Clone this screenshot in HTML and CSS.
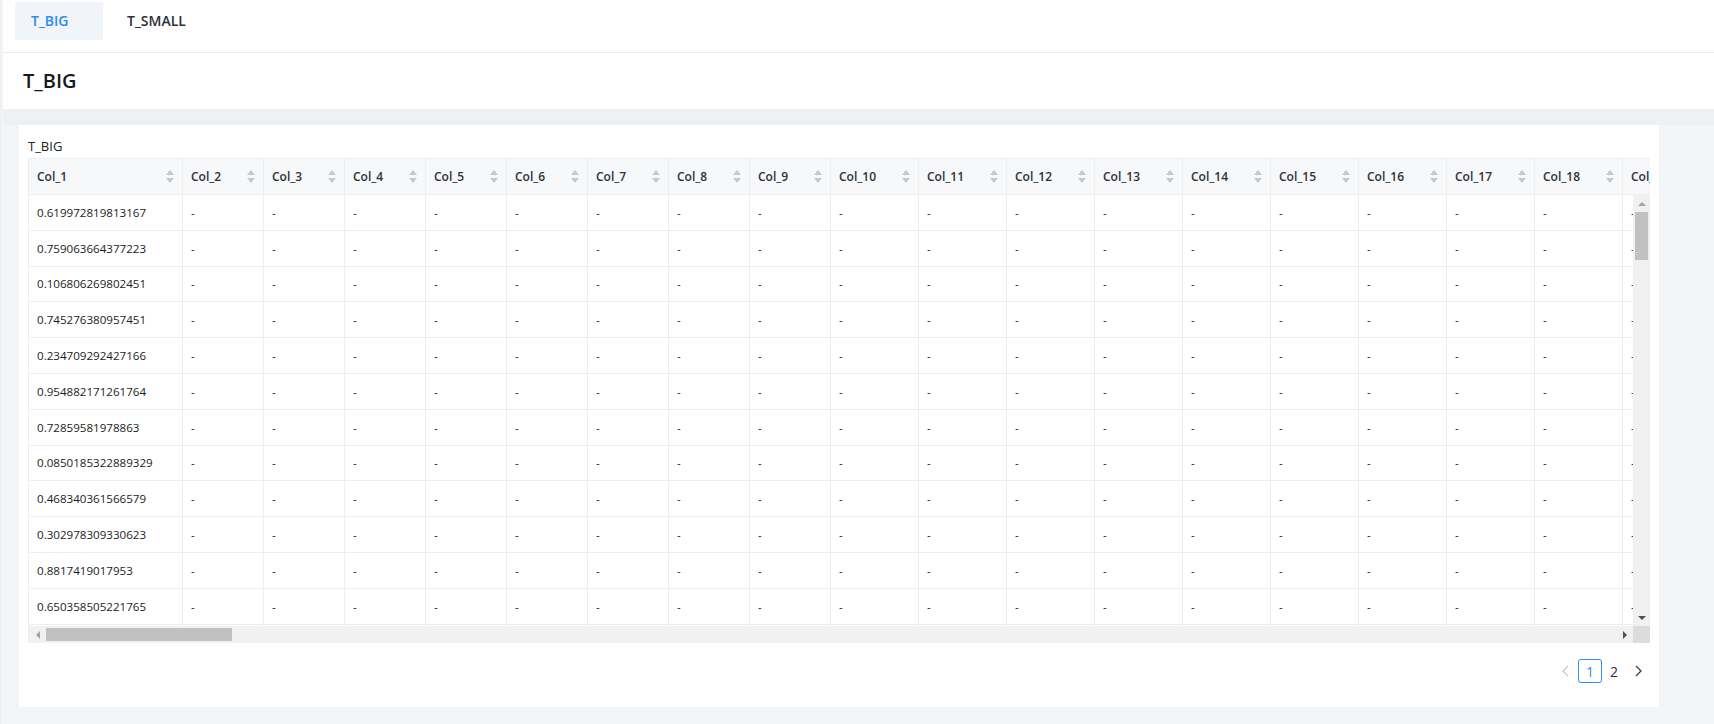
FILE: index.html
```html
<!DOCTYPE html>
<html lang="en">
<head>
<meta charset="utf-8">
<title>T_BIG</title>
<link rel="stylesheet" href="styles.css">
</head>
<body>
<div class="app">
  <div class="strip"></div>
  <div class="main">
    <div class="tabs">
      <div class="tab active">T_BIG</div>
      <div class="tab">T_SMALL</div>
    </div>
    <div class="page-head">T_BIG</div>
    <div class="content">
      <div class="card">
        <div class="card-label">T_BIG</div>
        <div class="tbl">
          <div class="thead">
            <div class="row">
              <div class="th"><span>Col_1</span><i class="sort"></i></div>
              <div class="th"><span>Col_2</span><i class="sort"></i></div>
              <div class="th"><span>Col_3</span><i class="sort"></i></div>
              <div class="th"><span>Col_4</span><i class="sort"></i></div>
              <div class="th"><span>Col_5</span><i class="sort"></i></div>
              <div class="th"><span>Col_6</span><i class="sort"></i></div>
              <div class="th"><span>Col_7</span><i class="sort"></i></div>
              <div class="th"><span>Col_8</span><i class="sort"></i></div>
              <div class="th"><span>Col_9</span><i class="sort"></i></div>
              <div class="th"><span>Col_10</span><i class="sort"></i></div>
              <div class="th"><span>Col_11</span><i class="sort"></i></div>
              <div class="th"><span>Col_12</span><i class="sort"></i></div>
              <div class="th"><span>Col_13</span><i class="sort"></i></div>
              <div class="th"><span>Col_14</span><i class="sort"></i></div>
              <div class="th"><span>Col_15</span><i class="sort"></i></div>
              <div class="th"><span>Col_16</span><i class="sort"></i></div>
              <div class="th"><span>Col_17</span><i class="sort"></i></div>
              <div class="th"><span>Col_18</span><i class="sort"></i></div>
              <div class="th"><span>Col_19</span><i class="sort"></i></div>
            </div>
          </div>
          <div class="tbody">
            <div class="body-view">
              <div class="row tr"><div class="td">0.619972819813167</div><div class="td">-</div><div class="td">-</div><div class="td">-</div><div class="td">-</div><div class="td">-</div><div class="td">-</div><div class="td">-</div><div class="td">-</div><div class="td">-</div><div class="td">-</div><div class="td">-</div><div class="td">-</div><div class="td">-</div><div class="td">-</div><div class="td">-</div><div class="td">-</div><div class="td">-</div><div class="td">-</div></div>
              <div class="row tr"><div class="td">0.759063664377223</div><div class="td">-</div><div class="td">-</div><div class="td">-</div><div class="td">-</div><div class="td">-</div><div class="td">-</div><div class="td">-</div><div class="td">-</div><div class="td">-</div><div class="td">-</div><div class="td">-</div><div class="td">-</div><div class="td">-</div><div class="td">-</div><div class="td">-</div><div class="td">-</div><div class="td">-</div><div class="td">-</div></div>
              <div class="row tr"><div class="td">0.106806269802451</div><div class="td">-</div><div class="td">-</div><div class="td">-</div><div class="td">-</div><div class="td">-</div><div class="td">-</div><div class="td">-</div><div class="td">-</div><div class="td">-</div><div class="td">-</div><div class="td">-</div><div class="td">-</div><div class="td">-</div><div class="td">-</div><div class="td">-</div><div class="td">-</div><div class="td">-</div><div class="td">-</div></div>
              <div class="row tr"><div class="td">0.745276380957451</div><div class="td">-</div><div class="td">-</div><div class="td">-</div><div class="td">-</div><div class="td">-</div><div class="td">-</div><div class="td">-</div><div class="td">-</div><div class="td">-</div><div class="td">-</div><div class="td">-</div><div class="td">-</div><div class="td">-</div><div class="td">-</div><div class="td">-</div><div class="td">-</div><div class="td">-</div><div class="td">-</div></div>
              <div class="row tr"><div class="td">0.234709292427166</div><div class="td">-</div><div class="td">-</div><div class="td">-</div><div class="td">-</div><div class="td">-</div><div class="td">-</div><div class="td">-</div><div class="td">-</div><div class="td">-</div><div class="td">-</div><div class="td">-</div><div class="td">-</div><div class="td">-</div><div class="td">-</div><div class="td">-</div><div class="td">-</div><div class="td">-</div><div class="td">-</div></div>
              <div class="row tr"><div class="td">0.954882171261764</div><div class="td">-</div><div class="td">-</div><div class="td">-</div><div class="td">-</div><div class="td">-</div><div class="td">-</div><div class="td">-</div><div class="td">-</div><div class="td">-</div><div class="td">-</div><div class="td">-</div><div class="td">-</div><div class="td">-</div><div class="td">-</div><div class="td">-</div><div class="td">-</div><div class="td">-</div><div class="td">-</div></div>
              <div class="row tr"><div class="td">0.72859581978863</div><div class="td">-</div><div class="td">-</div><div class="td">-</div><div class="td">-</div><div class="td">-</div><div class="td">-</div><div class="td">-</div><div class="td">-</div><div class="td">-</div><div class="td">-</div><div class="td">-</div><div class="td">-</div><div class="td">-</div><div class="td">-</div><div class="td">-</div><div class="td">-</div><div class="td">-</div><div class="td">-</div></div>
              <div class="row tr"><div class="td">0.0850185322889329</div><div class="td">-</div><div class="td">-</div><div class="td">-</div><div class="td">-</div><div class="td">-</div><div class="td">-</div><div class="td">-</div><div class="td">-</div><div class="td">-</div><div class="td">-</div><div class="td">-</div><div class="td">-</div><div class="td">-</div><div class="td">-</div><div class="td">-</div><div class="td">-</div><div class="td">-</div><div class="td">-</div></div>
              <div class="row tr"><div class="td">0.468340361566579</div><div class="td">-</div><div class="td">-</div><div class="td">-</div><div class="td">-</div><div class="td">-</div><div class="td">-</div><div class="td">-</div><div class="td">-</div><div class="td">-</div><div class="td">-</div><div class="td">-</div><div class="td">-</div><div class="td">-</div><div class="td">-</div><div class="td">-</div><div class="td">-</div><div class="td">-</div><div class="td">-</div></div>
              <div class="row tr"><div class="td">0.302978309330623</div><div class="td">-</div><div class="td">-</div><div class="td">-</div><div class="td">-</div><div class="td">-</div><div class="td">-</div><div class="td">-</div><div class="td">-</div><div class="td">-</div><div class="td">-</div><div class="td">-</div><div class="td">-</div><div class="td">-</div><div class="td">-</div><div class="td">-</div><div class="td">-</div><div class="td">-</div><div class="td">-</div></div>
              <div class="row tr"><div class="td">0.8817419017953</div><div class="td">-</div><div class="td">-</div><div class="td">-</div><div class="td">-</div><div class="td">-</div><div class="td">-</div><div class="td">-</div><div class="td">-</div><div class="td">-</div><div class="td">-</div><div class="td">-</div><div class="td">-</div><div class="td">-</div><div class="td">-</div><div class="td">-</div><div class="td">-</div><div class="td">-</div><div class="td">-</div></div>
              <div class="row tr"><div class="td">0.650358505221765</div><div class="td">-</div><div class="td">-</div><div class="td">-</div><div class="td">-</div><div class="td">-</div><div class="td">-</div><div class="td">-</div><div class="td">-</div><div class="td">-</div><div class="td">-</div><div class="td">-</div><div class="td">-</div><div class="td">-</div><div class="td">-</div><div class="td">-</div><div class="td">-</div><div class="td">-</div><div class="td">-</div></div>
              <div class="row tr"><div class="td">0.412376521839274</div><div class="td">-</div><div class="td">-</div><div class="td">-</div><div class="td">-</div><div class="td">-</div><div class="td">-</div><div class="td">-</div><div class="td">-</div><div class="td">-</div><div class="td">-</div><div class="td">-</div><div class="td">-</div><div class="td">-</div><div class="td">-</div><div class="td">-</div><div class="td">-</div><div class="td">-</div><div class="td">-</div></div>
            </div>
            <div class="vbar">
              <div class="sb-btn"><i class="tri tri-up"></i></div>
              <div class="vthumb"></div>
              <div class="sb-fill"></div>
              <div class="sb-btn"><i class="tri tri-down"></i></div>
            </div>
          </div>
          <div class="hrow">
            <div class="hbar">
              <div class="sb-btn"><i class="tri tri-left"></i></div>
              <div class="hthumb"></div>
              <div class="sb-fill"></div>
              <div class="sb-btn"><i class="tri tri-right"></i></div>
            </div>
            <div class="corner"></div>
          </div>
        </div>
        <div class="pager">
          <div class="pg pg-prev"><svg width="24" height="24" viewBox="0 0 24 24"><polyline points="14,7 9,12 14,17" fill="none" stroke="#c5c8ce" stroke-width="1.3"/></svg></div>
          <div class="pg pg-active">1</div>
          <div class="pg">2</div>
          <div class="pg pg-next"><svg width="24" height="24" viewBox="0 0 24 24"><polyline points="10,7 15,12 10,17" fill="none" stroke="#3a3d44" stroke-width="1.3"/></svg></div>
        </div>
      </div>
    </div>
  </div>
</div>
</body>
</html>
```
FILE: styles.css
```css
* { box-sizing: border-box; }
html, body { margin: 0; padding: 0; }
body {
  font-family: "Open Sans", "Noto Sans", "Liberation Sans", sans-serif;
  color: #1f2329;
  background: #fff;
  overflow: hidden;
}
.app { display: flex; height: 724px; }
.strip { width: 3px; flex: none; background: linear-gradient(to right, #eceef1, #f6f7f9); }
.main { flex: 1; min-width: 0; display: flex; flex-direction: column; }

.tabs {
  height: 53px;
  flex: none;
  border-bottom: 1px solid #e8ecf1;
  display: flex;
  align-items: flex-start;
  gap: 8px;
  padding: 2px 0 0 12px;
}
.tab {
  height: 38px;
  line-height: 38px;
  padding: 0 16px;
  font-size: 14px;
  font-weight: 600;
  color: #2c3038;
}
.tab.active { width: 88px; background: #f1f5f9; color: #2d8cf0; }

.page-head {
  height: 56px;
  flex: none;
  line-height: 56px;
  padding-left: 20px;
  font-size: 20px;
  font-weight: 600;
  color: #17191c;
}

.content {
  flex: 1;
  padding: 16px 55px 17px 16px;
  background: linear-gradient(#eef1f4 0, #eef1f4 16px, #f3f5f8 16px);
}
.card { height: 582px; background: #fff; padding: 11px 9px 0; }
.card-label { font-size: 13px; line-height: 20px; color: #222; margin-bottom: 2px; }

.tbl {
  width: 1622px;
  border-top: 1px solid #ebeef2;
  border-left: 1px solid #ebeef2;
  overflow: hidden;
}
.row {
  display: grid;
  grid-template-columns: 154px repeat(8, 81px) repeat(10, 88px);
  width: 1682px;
}
.thead { height: 36px; overflow: hidden; }
.th {
  height: 36px;
  background: #f6f8fa;
  border-right: 1px solid #ebeef2;
  border-bottom: 1px solid #ebeef2;
  padding: 0 8px;
  display: flex;
  align-items: center;
  justify-content: space-between;
  font-size: 12px;
  font-weight: 600;
  color: #2e3238;
  white-space: nowrap;
}
.sort { display: flex; flex-direction: column; gap: 3px; flex: none; }
.sort::before, .sort::after {
  content: "";
  display: block;
  border-left: 4px solid transparent;
  border-right: 4px solid transparent;
}
.sort::before { border-bottom: 5px solid #c5c8ce; }
.sort::after { border-top: 5px solid #c5c8ce; }

.tbody { display: flex; height: 431px; }
.body-view { width: 1604px; height: 431px; overflow: hidden; flex: none; }
.tr { height: 35.8px; }
.td {
  border-right: 1px solid #ebeef2;
  border-bottom: 1px solid #ebeef2;
  padding: 0 8px;
  display: flex;
  align-items: center;
  font-size: 11.6px;
  color: #1b1d21;
  white-space: nowrap;
  overflow: hidden;
}

.vbar {
  width: 17px;
  flex: none;
  background: #f1f1f1;
  display: flex;
  flex-direction: column;
  align-items: center;
}
.sb-btn { width: 17px; height: 17px; flex: none; display: flex; align-items: center; justify-content: center; }
.sb-fill { flex: 1; }
.vthumb { width: 13px; height: 48px; background: #c1c1c1; flex: none; }

.hrow { display: flex; height: 17px; }
.hbar {
  width: 1604px;
  flex: none;
  background: #f1f1f1;
  display: flex;
  align-items: center;
}
.hthumb { height: 13px; width: 186px; background: #c1c1c1; flex: none; }
.corner { width: 17px; background: #dcdcdc; }

.tri { display: block; width: 0; height: 0; }
.tri-up { border-left: 4px solid transparent; border-right: 4px solid transparent; border-bottom: 4px solid #a3a3a3; }
.tri-down { border-left: 4px solid transparent; border-right: 4px solid transparent; border-top: 4px solid #505050; }
.tri-left { border-top: 4px solid transparent; border-bottom: 4px solid transparent; border-right: 4px solid #a3a3a3; }
.tri-right { border-top: 4px solid transparent; border-bottom: 4px solid transparent; border-left: 4px solid #505050; }

.pager {
  display: flex;
  justify-content: flex-end;
  margin-top: 16px;
  height: 24px;
}
.pg {
  width: 24px;
  height: 24px;
  display: flex;
  align-items: center;
  justify-content: center;
  font-size: 14px;
  color: #2c3038;
}
.pg svg { display: block; }
.pg-active { border: 1px solid #2d8cf0; border-radius: 3px; color: #2d8cf0; }
```
